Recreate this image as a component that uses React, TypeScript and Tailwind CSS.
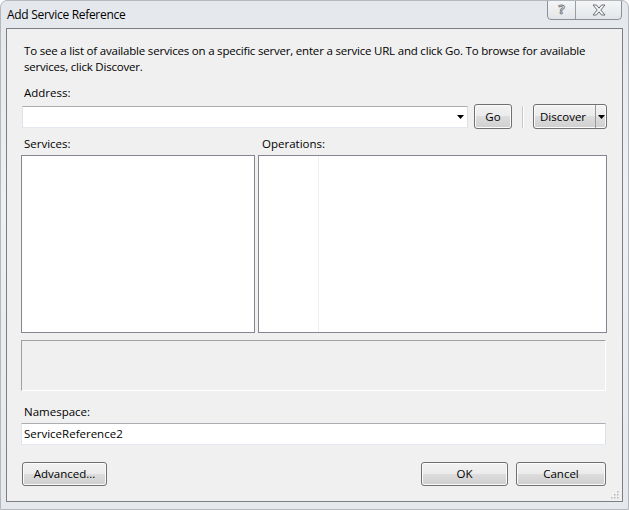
import React from "react";

const font = { fontFamily: '"Open Sans", "Noto Sans", sans-serif' };

const btn =
  "h-[24px] rounded-[3px] border border-[#707070] bg-[linear-gradient(to_bottom,#f2f2f2_0%,#ebebeb_50%,#dddddd_50%,#cfcfcf_100%)] shadow-[inset_0_0_0_1px_#fbfbfb] text-[11.5px] text-black flex items-center justify-center";

const Caret = () => (
  <svg width="7" height="4" viewBox="0 0 7 4">
    <path d="M0 0h7L3.5 4z" fill="#000" />
  </svg>
);

export default function App() {
  return (
    <div
      className="w-[629px] h-[510px] relative overflow-hidden rounded-t-[7px] bg-[linear-gradient(to_bottom,#e4e8ec,#eef1f3_40%,#e6e9ec)] border border-[#b4b8bd]"
      style={font}
    >
      {/* caption buttons */}
      <div className="absolute right-[6px] top-[-1px] flex h-[20px] rounded-b-[4px] border border-[#8c9095] bg-[linear-gradient(to_bottom,#f4f5f6,#e3e6e9)] overflow-hidden">
        <div className="w-[28px] flex items-center justify-center border-r border-[#9a9ea3] text-[13px] text-[#f8f8f8] font-bold [-webkit-text-stroke:0.8px_#6b6f74]">
          ?
        </div>
        <div className="w-[45px] flex items-center justify-center">
          <svg width="14" height="12" viewBox="0 0 14 12">
            <path
              d="M1 1h3.5L7 4.2 9.5 1H13L8.8 6 13 11H9.5L7 7.8 4.5 11H1l4.2-5z"
              fill="#f6f6f6"
              stroke="#6b6f74"
              strokeWidth="1"
            />
          </svg>
        </div>
      </div>

      <div className="h-[27px] flex items-center pl-[6px] text-[12px] tracking-[-0.3px] text-black">
        Add Service Reference
      </div>

      {/* client area */}
      <div className="mx-[5px] h-[474px] border border-[#7b7f84] bg-[#f0f0f0] relative pl-[14px] pr-[15px] pt-[14px] flex flex-col text-[11.5px] text-black">
        <p className="leading-[16px] pl-[3px] tracking-[-0.2px]">
          To see a list of available services on a specific server, enter a service URL and click Go. To browse for available services, click Discover.
        </p>

        <div className="mt-[10px] leading-[16px] pl-[3px]">Address:</div>

        <div className="mt-[3px] flex items-center h-[25px]">
          <div className="ml-[1px] w-[446px] h-[22px] bg-white border border-[#abadb3] border-b-[#e3e9ef] border-l-[#e2e3ea] border-r-[#dbdfe6] flex items-center justify-end pr-[3px]">
            <Caret />
          </div>
          <div className={btn + " ml-[6px] w-[38px] h-[25px]"}>Go</div>
          <div className="ml-[10px] w-px h-[22px] bg-[#c8c8c8] border-r border-white box-content" />
          <div className={btn + " ml-[9px] w-[74px] h-[25px] justify-start"}>
            <span className="pl-[6px] w-[61px]">Discover</span>
            <span className="h-full border-l border-[#9a9a9a] flex-1 flex items-center justify-center">
              <Caret />
            </span>
          </div>
        </div>

        <div className="mt-[7px] flex leading-[16px]">
          <div className="w-[237px] pl-[3px]">Services:</div>
          <div className="pl-[4px]">Operations:</div>
        </div>

        <div className="mt-[3px] flex gap-[3px] h-[178px]">
          <div className="w-[234px] bg-white border border-[#828790]" />
          <div className="flex-1 bg-white border border-[#828790] flex">
            <div className="w-[60px] border-r border-[#eeeef4]" />
          </div>
        </div>

        <div className="mt-[7px] h-[51px] mr-[1px] border border-t-[#a0a0a0] border-l-[#a0a0a0] border-r-white border-b-white" />

        <div className="mt-[13px] leading-[16px] pl-[3px]">Namespace:</div>
        <div className="mt-[3px] mr-[1px] h-[22px] bg-white border border-[#abadb3] border-b-[#e3e9ef] border-l-[#e2e3ea] border-r-[#dbdfe6] flex items-center pl-[2px]">
          ServiceReference2
        </div>

        <div className="mt-[17px] flex items-center">
          <div className={btn + " ml-[1px] w-[85px]"}>Advanced...</div>
          <div className="flex-1" />
          <div className={btn + " w-[87px] border-[#3c7fb1] shadow-[inset_0_0_0_1px_#bde6f8]"}>OK</div>
          <div className={btn + " ml-[8px] mr-[1px] w-[90px]"}>Cancel</div>
        </div>

        {/* resize grip */}
        <svg className="absolute right-[3px] bottom-[2px]" width="10" height="10" viewBox="0 0 10 10">
          {[
            [8, 2],
            [8, 5],
            [5, 5],
            [8, 8],
            [5, 8],
            [2, 8],
          ].map(([x, y], i) => (
            <rect key={i} x={x} y={y} width="1.5" height="1.5" fill="#b8b8b8" />
          ))}
        </svg>
      </div>
    </div>
  );
}
